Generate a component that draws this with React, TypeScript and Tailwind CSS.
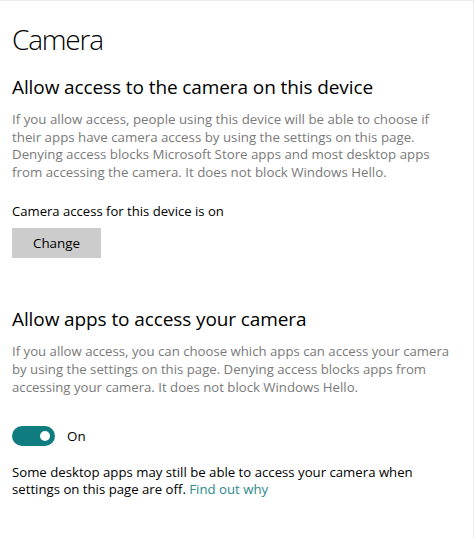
import React from "react";

export default function App() {
  return (
    <div
      className="w-[474px] h-[538px] bg-white overflow-hidden border-t border-r border-[#ececec] text-black"
      style={{ fontFamily: '"Open Sans", "Noto Sans", sans-serif' }}
    >
      <div className="pl-[12px] pr-[10px]">
        <h1 className="pt-[20px] text-[28px] leading-[36px] font-light tracking-[-1.2px]">Camera</h1>
        <h2 className="mt-[17px] text-[19px] leading-[26px] font-normal tracking-[-0.1px]">
          Allow access to the camera on this device
        </h2>
        <p className="mt-[11px] text-[13.3px] leading-[17.7px] text-[#7a7a7a] whitespace-nowrap">
          If you allow access, people using this device will be able to choose if
          <br />
          their apps have camera access by using the settings on this page.
          <br />
          Denying access blocks Microsoft Store apps and most desktop apps
          <br />
          from accessing the camera. It does not block Windows Hello.
        </p>
        <p className="mt-[20px] text-[13.1px] leading-[18px]">
          Camera access for this device is on
        </p>
        <button className="mt-[8px] w-[89px] h-[30px] bg-[#cccccc] text-[13.4px] text-black">
          Change
        </button>
        <h2 className="mt-[48px] text-[19px] leading-[26px] font-normal tracking-[-0.1px]">
          Allow apps to access your camera
        </h2>
        <p className="mt-[10px] text-[13.2px] leading-[18.3px] text-[#7a7a7a] whitespace-nowrap">
          If you allow access, you can choose which apps can access your camera
          <br />
          by using the settings on this page. Denying access blocks apps from
          <br />
          accessing your camera. It does not block Windows Hello.
        </p>
        <div className="mt-[29px] flex items-center gap-[12px]">
          <div className="w-[43px] h-[20px] rounded-full bg-[#0f7c80] flex items-center justify-end pr-[5px]">
            <div className="w-[10px] h-[10px] rounded-full bg-white" />
          </div>
          <span className="text-[13.4px] leading-[20px]">On</span>
        </div>
        <p className="mt-[18px] text-[13.2px] leading-[17.5px] whitespace-nowrap">
          Some desktop apps may still be able to access your camera when
          <br />
          settings on this page are off. <a className="text-[#2a8a8c]">Find out why</a>
        </p>
      </div>
    </div>
  );
}
